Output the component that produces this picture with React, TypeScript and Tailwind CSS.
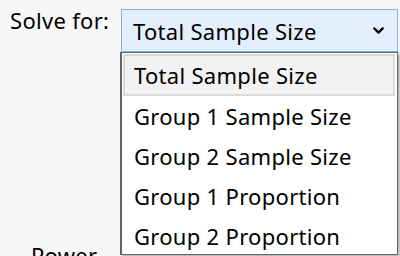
import { ChevronDown } from "lucide-react";

const options = [
  "Total Sample Size",
  "Group 1 Sample Size",
  "Group 2 Sample Size",
  "Group 1 Proportion",
  "Group 2 Proportion",
];

export default function App() {
  return (
    <div
      className="relative w-[400px] h-[256px] overflow-hidden bg-[#f7f7f7] text-black tracking-[0.3px]"
      style={{ fontFamily: '"Noto Sans", "Open Sans", sans-serif' }}
    >
      {/* Form rows */}
      <div className="flex flex-col">
        <div className="flex items-start pt-[9px]">
          <div className="w-[121px] pl-[10px] text-[22px] leading-[22px]">Solve for:</div>
          <div className="w-[277px] h-[43px] flex items-center justify-between border border-[#7eb4ea] bg-[#e3effb] pl-[11px] pr-[10px] pt-[2px]">
            <span className="text-[22px]">Total Sample Size</span>
            <ChevronDown size={17} strokeWidth={3.2} className="-mt-[3px]" />
          </div>
        </div>
        <div className="pl-[31px] pt-[192px] text-[22px] leading-[22px]">Power</div>
      </div>

      {/* Open dropdown list */}
      <div className="absolute left-[120px] top-[52px] w-[278px] h-[203px] border border-[#646464] border-l-2 bg-white shadow-[2px_2px_3px_rgba(0,0,0,0.3)] pt-px pl-px pr-[2px]">
        {options.map((o, i) => (
          <div
            key={o}
            className={
              "flex items-center text-[22px] " +
              (i === 0 ? "h-[42px] bg-[#f2f2f2] border-2 border-[#dadada] pl-[9px]" : "h-[40px] pl-[11px]")
            }
          >
            {o}
          </div>
        ))}
      </div>
    </div>
  );
}
